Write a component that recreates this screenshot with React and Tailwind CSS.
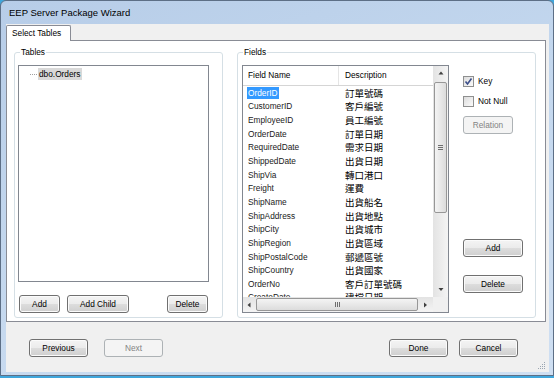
import React from "react";

const fields = [
  ["OrderID", "訂單號碼"],
  ["CustomerID", "客戶編號"],
  ["EmployeeID", "員工編號"],
  ["OrderDate", "訂單日期"],
  ["RequiredDate", "需求日期"],
  ["ShippedDate", "出貨日期"],
  ["ShipVia", "轉口港口"],
  ["Freight", "運費"],
  ["ShipName", "出貨船名"],
  ["ShipAddress", "出貨地點"],
  ["ShipCity", "出貨城市"],
  ["ShipRegion", "出貨區域"],
  ["ShipPostalCode", "郵遞區號"],
  ["ShipCountry", "出貨國家"],
  ["OrderNo", "客戶訂單號碼"],
  ["CreateDate", "建檔日期"],
];

const sans = "font-['Liberation_Sans',Arial,sans-serif]";
const cjk = "font-['Noto_Sans_CJK_TC','Noto_Sans_CJK_SC',sans-serif]";

const Button = ({ label, w = "w-[59px]", disabled }) => (
  <div
    className={`${w} h-[18px] shrink-0 rounded-[3px] border flex items-center justify-center text-[8.3px] ${
      disabled
        ? "border-[#adb2b5] bg-[#f4f4f4] text-[#838383]"
        : "border-[#707070] bg-[linear-gradient(to_bottom,#f4f4f4_0%,#ebebeb_50%,#dddddd_50%,#cfcfcf_100%)] shadow-[inset_0_0_0_1px_#fbfbfb] text-black"
    }`}
  >
    {label}
  </div>
);

const CheckBox = ({ checked, label }) => (
  <div className="flex items-center gap-[4px] h-[11px]">
    <div className="w-[11px] h-[11px] border border-[#8e8f8f] bg-[linear-gradient(135deg,#dcdcdc,#fbfbfb)] flex items-center justify-center">
      {checked && (
        <svg width="9" height="9" viewBox="0 0 9 9">
          <path d="M1.5 4.5 L3.5 7 L7.5 1.5" fill="none" stroke="#3c4f8a" strokeWidth="1.6" />
        </svg>
      )}
    </div>
    <span className="text-[8.3px] leading-none">{label}</span>
  </div>
);

const Arrow = ({ dir }) => {
  const d = {
    up: "M1.5 4.5 L4 1.5 L6.5 4.5 Z",
    down: "M1.5 2 L4 5 L6.5 2 Z",
    left: "M4.5 1.5 L1.5 4 L4.5 6.5 Z",
    right: "M2 1.5 L5 4 L2 6.5 Z",
  }[dir];
  return (
    <svg width="8" height="8" viewBox="0 0 8 8">
      <path d={d} fill="#404040" />
    </svg>
  );
};

const GroupBox = ({ title, className, children }) => (
  <div className={`relative border border-[#d5dfe5] rounded-[3px] ${className}`}>
    <span className="absolute left-[5px] top-[-6px] bg-white px-[1px] text-[8.3px] leading-[10px]">
      {title}
    </span>
    {children}
  </div>
);

export default function App() {
  return (
    <div className={`w-[554px] h-[378px] bg-[#3fa6dc] ${sans} text-black`}>
      <div className="w-[554px] h-[376px] rounded-t-[6px] border border-[#5d6f86] bg-[linear-gradient(160deg,#b7cde8_0%,#c3d7ee_45%,#cfdff2_100%)] flex flex-col">
        <div className="h-[23px] pl-[8px] pt-[2px] flex items-center text-[9.5px] text-black">
          EEP Server Package Wizard
        </div>
        <div className="ml-[5px] w-[543px] h-[348px] bg-[#f0f0f0] flex flex-col">
          {/* tab strip */}
          <div className="h-[16px] pt-[1px] flex">
            <div className="w-[65px] h-[16px] border-l border-t border-r border-[#898c95] bg-white flex items-center pl-[5px] text-[8.3px] relative z-10 rounded-t-[2px]">
              Select Tables
            </div>
          </div>
          {/* tab page */}
          <div className="w-[540px] h-[282px] border border-[#898c95] bg-white flex pl-[7px] pt-[11px]">
            <GroupBox title="Tables" className="w-[209px] h-[266px] shrink-0">
              <div className="ml-[3px] mt-[12px] w-[191px] h-[217px] border border-[#828790] bg-white">
                <div className="flex items-center mt-[2px] ml-[11px]">
                  <div className="w-[7px] border-t border-dotted border-[#a0a0a0]" />
                  <span className="ml-[1px] px-[1px] h-[12px] bg-[#d9d9d9] text-[8.3px] flex items-center">
                    dbo.Orders
                  </span>
                </div>
              </div>
              <div className="mt-[13px] ml-[4px] flex">
                <Button label="Add" w="w-[41px]" />
                <div className="ml-[7px]">
                  <Button label="Add Child" w="w-[62px]" />
                </div>
                <div className="ml-[38px]">
                  <Button label="Delete" w="w-[41px]" />
                </div>
              </div>
            </GroupBox>
            <GroupBox title="Fields" className="ml-[14px] w-[299px] h-[266px] shrink-0 flex">
              {/* list view */}
              <div className="ml-[4px] mt-[12px] w-[207px] h-[248px] border border-[#828790] bg-white flex flex-col shrink-0">
                <div className="flex">
                  <div className="w-[190px] h-[231px] overflow-hidden">
                    <div className="h-[20px] flex border-b border-[#d5d5d5] text-[8.3px]">
                      <div className="w-[96px] border-r border-[#e5e5e5] pl-[5px] flex items-center">Field Name</div>
                      <div className="w-[94px] pl-[6px] flex items-center">Description</div>
                    </div>
                    {fields.map(([name, desc], i) => (
                      <div key={name} className="h-[13.65px] flex items-center">
                        <div className="w-[96px] pl-[4px] flex">
                          <span
                            className={`px-[1px] text-[8.3px] leading-[12px] ${
                              i === 0 ? "bg-[#3399ff] text-white" : "text-[#1a1a1a]"
                            }`}
                          >
                            {name}
                          </span>
                        </div>
                        <div className={`w-[94px] pl-[6px] text-[9.5px] leading-[12px] ${cjk}`}>{desc}</div>
                      </div>
                    ))}
                  </div>
                  {/* vertical scrollbar */}
                  <div className="w-[15px] h-[231px] bg-[linear-gradient(to_right,#e3e3e3,#f4f4f4)] flex flex-col items-center">
                    <div className="h-[15px] flex items-center justify-center"><Arrow dir="up" /></div>
                    <div className="mt-[1px] w-[13px] h-[131px] rounded-[2px] border border-[#979797] bg-[linear-gradient(to_right,#f4f4f4,#dcdcdc)] flex flex-col items-center justify-center gap-[1px]">
                      <div className="w-[5px] h-px bg-[#6e6e6e]" />
                      <div className="w-[5px] h-px bg-[#6e6e6e]" />
                      <div className="w-[5px] h-px bg-[#6e6e6e]" />
                    </div>
                    <div className="flex-1" />
                    <div className="h-[15px] flex items-center justify-center"><Arrow dir="down" /></div>
                  </div>
                </div>
                <div className="flex h-[15px]">
                  <div className="w-[190px] h-[15px] bg-[linear-gradient(to_bottom,#e3e3e3,#f4f4f4)] flex items-center">
                    <div className="w-[13px] flex justify-center"><Arrow dir="left" /></div>
                    <div className="w-[162px] h-[13px] rounded-[2px] border border-[#979797] bg-[linear-gradient(to_bottom,#f4f4f4,#dcdcdc)] flex items-center justify-center gap-[1px]">
                      <div className="w-px h-[5px] bg-[#6e6e6e]" />
                      <div className="w-px h-[5px] bg-[#6e6e6e]" />
                      <div className="w-px h-[5px] bg-[#6e6e6e]" />
                    </div>
                    <div className="flex-1 flex justify-center"><Arrow dir="right" /></div>
                  </div>
                  <div className="w-[15px] h-[15px] bg-[#f0f0f0]" />
                </div>
              </div>
              {/* right column */}
              <div className="ml-[14px] flex flex-col">
                <div className="mt-[23px]">
                  <CheckBox checked label="Key" />
                </div>
                <div className="mt-[9px]">
                  <CheckBox label="Not Null" />
                </div>
                <div className="mt-[9px]">
                  <Button label="Relation" w="w-[50px]" disabled />
                </div>
                <div className="mt-[105px]">
                  <Button label="Add" w="w-[60px]" />
                </div>
                <div className="mt-[18px]">
                  <Button label="Delete" w="w-[60px]" />
                </div>
              </div>
            </GroupBox>
          </div>
          {/* footer */}
          <div className="flex-1 flex pt-[17px] pl-[23px] relative">
            <Button label="Previous" />
            <div className="ml-[16px]">
              <Button label="Next" disabled />
            </div>
            <div className="ml-[226px]">
              <Button label="Done" />
            </div>
            <div className="ml-[11px]">
              <Button label="Cancel" />
            </div>
            <svg className="absolute right-[3px] bottom-[2px]" width="8" height="8" viewBox="0 0 8 8">
              <rect x="6" y="0" width="1" height="1" fill="#9aa5b1" />
              <rect x="4" y="2" width="1" height="1" fill="#9aa5b1" />
              <rect x="6" y="2" width="1" height="1" fill="#9aa5b1" />
              <rect x="2" y="4" width="1" height="1" fill="#9aa5b1" />
              <rect x="4" y="4" width="1" height="1" fill="#9aa5b1" />
              <rect x="6" y="4" width="1" height="1" fill="#9aa5b1" />
              <rect x="0" y="6" width="1" height="1" fill="#9aa5b1" />
              <rect x="2" y="6" width="1" height="1" fill="#9aa5b1" />
              <rect x="4" y="6" width="1" height="1" fill="#9aa5b1" />
              <rect x="6" y="6" width="1" height="1" fill="#9aa5b1" />
            </svg>
          </div>
        </div>
      </div>
    </div>
  );
}
